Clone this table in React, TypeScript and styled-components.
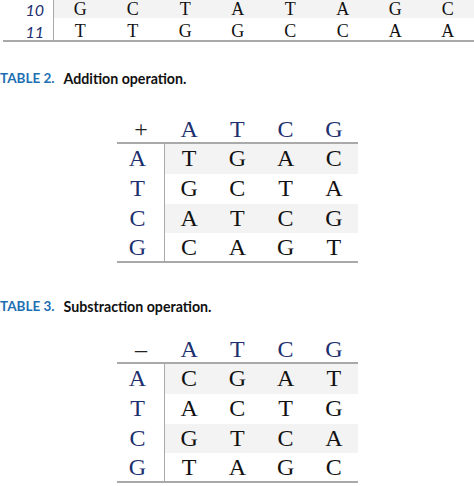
import React from "react";
import styled, { createGlobalStyle } from "styled-components";

const GlobalStyle = createGlobalStyle`
  html, body {
    margin: 0;
    padding: 0;
    background: #ffffff;
  }
  body {
    width: 474px;
    height: 486px;
    overflow: hidden;
  }
`;

const NAVY = "#1c2f6e";
const RULE = "#a9a9a9";
const SHADE = "#f3f3f3";

const topRows = [
  { n: "10", cells: ["G", "C", "T", "A", "T", "A", "G", "C"] },
  { n: "11", cells: ["T", "T", "G", "G", "C", "C", "A", "A"] },
];

const addRows = [
  ["A", "T", "G", "A", "C"],
  ["T", "G", "C", "T", "A"],
  ["C", "A", "T", "C", "G"],
  ["G", "C", "A", "G", "T"],
];

const subRows = [
  ["A", "C", "G", "A", "T"],
  ["T", "A", "C", "T", "G"],
  ["C", "G", "T", "C", "A"],
  ["G", "T", "A", "G", "C"],
];

const header = ["A", "T", "C", "G"];

function OpTable({ op, rows }: { op: string; rows: string[][] }) {
  return (
    <OpGrid>
      <HeadCell $dark>{op}</HeadCell>
      {header.map((h) => (
        <HeadCell key={h}>{h}</HeadCell>
      ))}
      {rows.map((r, i) => (
        <React.Fragment key={i}>
          <StubCell $last={i === rows.length - 1}>{r[0]}</StubCell>
          {r.slice(1).map((c, j) => (
            <DataCell key={j} $shaded={i % 2 === 0} $last={i === rows.length - 1}>
              {c}
            </DataCell>
          ))}
        </React.Fragment>
      ))}
    </OpGrid>
  );
}

export default function App() {
  return (
    <>
      <GlobalStyle />
      <Page>
        <TopTable>
          {topRows.map((row, i) => (
            <React.Fragment key={row.n}>
              <NumCell $last={i === topRows.length - 1}>{row.n}</NumCell>
              {row.cells.map((c, j) => (
                <TopCell key={j} $shaded={i === 0} $last={i === topRows.length - 1}>
                  {c}
                </TopCell>
              ))}
            </React.Fragment>
          ))}
        </TopTable>

        <Caption $top={28}>
          <Label>TABLE 2.</Label>
          <Title>Addition operation.</Title>
        </Caption>
        <TableWrap $top={28}>
          <OpTable op="+" rows={addRows} />
        </TableWrap>

        <Caption $top={35}>
          <Label>TABLE 3.</Label>
          <Title>Substraction operation.</Title>
        </Caption>
        <TableWrap $top={20}>
          <OpTable op="–" rows={subRows} />
        </TableWrap>
      </Page>
    </>
  );
}

const Page = styled.div`
  display: flex;
  flex-direction: column;
  width: 474px;
`;

const TopTable = styled.div`
  display: grid;
  grid-template-columns: 51px repeat(8, 1fr);
  grid-template-rows: 18px 24px;
  margin-left: 3px;
`;

const NumCell = styled.div<{ $last?: boolean }>`
  display: flex;
  align-items: center;
  justify-content: flex-end;
  padding: ${(p) => (p.$last ? "4px 9px 0 0" : "0 9px 0 0")};
  font-family: "Lato", "Open Sans", sans-serif;
  font-style: italic;
  font-size: 16px;
  color: ${NAVY};
  border-right: 1px solid ${RULE};
  border-bottom: ${(p) => (p.$last ? `2px solid ${RULE}` : "none")};
  box-sizing: border-box;
`;

const TopCell = styled.div<{ $shaded?: boolean; $last?: boolean }>`
  display: flex;
  align-items: center;
  justify-content: center;
  padding-top: ${(p) => (p.$last ? "4px" : "0")};
  font-family: "Liberation Serif", "Times New Roman", serif;
  font-size: 18px;
  color: #111;
  background: ${(p) => (p.$shaded ? SHADE : "transparent")};
  border-bottom: ${(p) => (p.$last ? `2px solid ${RULE}` : "none")};
  box-sizing: border-box;
`;

const Caption = styled.div<{ $top: number }>`
  display: flex;
  gap: 9px;
  margin-top: ${(p) => p.$top}px;
  height: 16px;
  align-items: center;
  font-family: "Lato", "Open Sans", sans-serif;
  font-weight: 700;
  font-size: 13.5px;
`;

const Label = styled.span`
  color: #1d6fb3;
`;

const Title = styled.span`
  color: #111;
  font-size: 14.2px;
`;

const TableWrap = styled.div<{ $top: number }>`
  margin-top: ${(p) => p.$top}px;
  margin-left: 117px;
`;

const OpGrid = styled.div`
  display: grid;
  width: 241px;
  grid-template-columns: 48px repeat(4, 1fr);
  grid-template-rows: 30px repeat(4, 29.75px);
  font-family: "Liberation Serif", "Times New Roman", serif;
  font-size: 24px;
`;

const HeadCell = styled.div<{ $dark?: boolean }>`
  display: flex;
  align-items: center;
  justify-content: center;
  padding-top: 2px;
  color: ${(p) => (p.$dark ? "#222" : NAVY)};
  border-bottom: 2px solid ${RULE};
  box-sizing: border-box;
`;

const StubCell = styled.div<{ $last?: boolean }>`
  display: flex;
  align-items: center;
  justify-content: center;
  padding-right: 6px;
  color: ${NAVY};
  border-right: 1px solid ${RULE};
  border-bottom: ${(p) => (p.$last ? `2px solid ${RULE}` : "none")};
`;

const DataCell = styled.div<{ $shaded?: boolean; $last?: boolean }>`
  display: flex;
  align-items: center;
  justify-content: center;
  color: #111;
  background: ${(p) => (p.$shaded ? SHADE : "transparent")};
  border-bottom: ${(p) => (p.$last ? `2px solid ${RULE}` : "none")};
`;
